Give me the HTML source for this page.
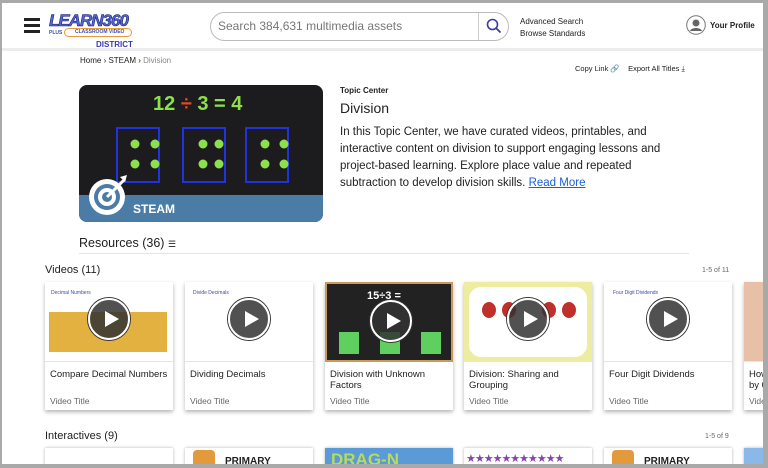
<!DOCTYPE html>
<html><head><meta charset="utf-8"><style>
*{margin:0;padding:0;box-sizing:border-box}
body{width:768px;height:468px;overflow:hidden;background:#fff;font-family:"Liberation Sans",Arial,sans-serif;color:#222;position:relative}
.frame{position:absolute;inset:0;border-top:3px solid #a9a9a9;border-left:2px solid #a9a9a9;border-right:5px solid #a9a9a9;border-bottom:4px solid #a9a9a9;pointer-events:none;z-index:10}
.hdr{position:absolute;left:0;top:0;width:768px;height:51px;border-bottom:3px solid #ececec}
.abs{position:absolute}
.card{position:absolute;top:282px;width:128px;height:128px;background:#fff;box-shadow:0 2px 4px rgba(0,0,0,.3)}
.thumb{height:80px;position:relative;overflow:hidden;border-bottom:1px solid #e5e5e5}
.play{position:absolute;left:43px;top:16px;width:42px;height:42px;border-radius:50%;background:rgba(50,50,50,.85);border:2px solid #fff;box-shadow:0 0 0 1px #333}
.play:after{content:"";position:absolute;left:15px;top:11px;border-left:14px solid #fff;border-top:8px solid transparent;border-bottom:8px solid transparent}
.ct{position:absolute;left:5px;top:87px;font-size:9.5px;line-height:11px;color:#222;white-space:nowrap}
.cs{position:absolute;left:5px;top:114px;font-size:8.5px;color:#666}
.ic{position:absolute;top:448px;width:128px;height:20px;background:#fff;box-shadow:0 0 3px rgba(0,0,0,.3);overflow:hidden}
</style></head><body>
<div class="frame"></div>
<div class="hdr">
 <div class="abs" style="left:24px;top:18px;width:16px;height:3px;background:#222;box-shadow:0 6px 0 #222,0 12px 0 #222"></div>
 <div class="abs" style="left:49px;top:11px;font:italic bold 17px 'Liberation Sans';color:#5566cc;letter-spacing:-1px;-webkit-text-stroke:0.6px #1a237e">LEARN360</div>
 <div class="abs" style="left:49px;top:30px;font-size:5px;color:#3b4fb8;font-weight:bold">PLUS</div>
 <div class="abs" style="left:64px;top:28px;width:68px;height:9px;border:1px solid #e89a3a;border-radius:5px;font-size:5px;color:#3b4fb8;font-weight:bold;padding-left:10px;line-height:7px">CLASSROOM VIDEO</div>
 <div class="abs" style="left:96px;top:40px;font-size:8px;font-weight:bold;color:#3b3bb0">DISTRICT</div>
 <div class="abs" style="left:210px;top:12px;width:299px;height:29px;border:1px solid #bbb;border-radius:15px"></div>
 <div class="abs" style="left:218px;top:19px;font-size:12px;color:#777">Search 384,631 multimedia assets</div>
 <div class="abs" style="left:478px;top:13px;width:1px;height:27px;background:#ccc"></div>
 <svg class="abs" style="left:486px;top:18px" width="16" height="16" viewBox="0 0 16 16"><circle cx="6.5" cy="6.5" r="5" fill="none" stroke="#3b3b9a" stroke-width="1.6"/><path d="M10 10l4.5 4.5" stroke="#3b3b9a" stroke-width="1.8"/></svg>
 <div class="abs" style="left:520px;top:16px;font-size:8px;line-height:12px;color:#222">Advanced Search<br>Browse Standards</div>
 <svg class="abs" style="left:686px;top:15px" width="20" height="20" viewBox="0 0 20 20"><circle cx="10" cy="10" r="9.3" fill="#fff" stroke="#777" stroke-width="1"/><circle cx="10" cy="8" r="3.5" fill="#666"/><path d="M4 16c1-4 11-4 12 0" fill="#666"/></svg>
 <div class="abs" style="left:710px;top:21px;font-size:8px;font-weight:bold;color:#222">Your Profile</div>
</div>
<div class="abs" style="left:80px;top:56px;font-size:8px;color:#222">Home › STEAM › <span style="color:#888">Division</span></div>
<div class="abs" style="left:575px;top:64px;font-size:7.5px;color:#222">Copy Link 🔗&nbsp;&nbsp;&nbsp;&nbsp;Export All Titles ⤓</div>
<div class="abs" style="left:79px;top:85px;width:244px;height:137px;border-radius:8px;overflow:hidden;background:#1c1c1e">
 <div class="abs" style="left:74px;top:8px;font-size:20px;font-weight:bold;color:#8de04c">12 <span style="color:#d94b2b">÷</span> 3 = 4</div>
 <div class="abs" style="left:37px;top:42px;width:44px;height:56px;border:2px solid #2233dd"></div>
 <div class="abs" style="left:103px;top:42px;width:44px;height:56px;border:2px solid #2233dd"></div>
 <div class="abs" style="left:166px;top:42px;width:44px;height:56px;border:2px solid #2233dd"></div>
 <svg class="abs" style="left:0;top:0" width="244" height="137"><g fill="#8de04c"><circle cx="56" cy="59" r="4.5"/><circle cx="76" cy="59" r="4.5"/><circle cx="56" cy="79" r="4.5"/><circle cx="76" cy="79" r="4.5"/><circle cx="124" cy="59" r="4.5"/><circle cx="140" cy="59" r="4.5"/><circle cx="124" cy="79" r="4.5"/><circle cx="140" cy="79" r="4.5"/><circle cx="186" cy="59" r="4.5"/><circle cx="205" cy="59" r="4.5"/><circle cx="186" cy="79" r="4.5"/><circle cx="205" cy="79" r="4.5"/></g></svg>
 <div class="abs" style="left:0;top:110px;width:244px;height:27px;background:#4a7ca6"></div>
 <div class="abs" style="left:54px;top:117px;font-size:12px;font-weight:bold;color:#fff">STEAM</div>
 <svg class="abs" style="left:8px;top:88px" width="44" height="44" viewBox="0 0 44 44"><circle cx="20" cy="24" r="18" fill="#fff"/><circle cx="20" cy="24" r="13" fill="#4a7ca6"/><circle cx="20" cy="24" r="9" fill="#fff"/><circle cx="20" cy="24" r="5" fill="#4a7ca6"/><path d="M20 24L38 6" stroke="#fff" stroke-width="3"/><path d="M33 4l7-2-2 7z" fill="#fff"/></svg>
</div>
<div class="abs" style="left:340px;top:86px;font-size:8px;font-weight:bold">Topic Center</div>
<div class="abs" style="left:340px;top:100px;font-size:14px">Division</div>
<div class="abs" style="left:340px;top:124px;width:340px;font-size:11.5px;line-height:17px;color:#222">In this Topic Center, we have curated videos, printables, and interactive content on division to support engaging lessons and project-based learning. Explore place value and repeated subtraction to develop division skills. <span style="color:#1a5fd6;text-decoration:underline">Read More</span></div>
<div class="abs" style="left:79px;top:236px;font-size:12.5px">Resources (36) <span style="font-size:9px">☰</span></div>
<div class="abs" style="left:79px;top:253px;width:610px;height:1px;background:#e5e5e5"></div>
<div class="abs" style="left:45px;top:264px;font-size:11px">Videos (11)</div>
<div class="abs" style="left:702px;top:267px;font-size:7px;color:#666">1-5 of 11</div>
<div class="card" style="left:45px"><div class="thumb" style="background:#fff"><div class="abs" style="left:4px;top:30px;width:118px;height:40px;background:#e3b13f"></div><div class="abs" style="left:6px;top:8px;font-size:5px;color:#3a4fa0">Decimal Numbers</div><div class="play"></div></div><div class="ct">Compare Decimal Numbers</div><div class="cs">Video Title</div></div>
<div class="card" style="left:185px"><div class="thumb"><div class="abs" style="left:8px;top:8px;font-size:5px;color:#3a4fa0">Divide Decimals</div><div class="play"></div></div><div class="ct">Dividing Decimals</div><div class="cs">Video Title</div></div>
<div class="card" style="left:325px"><div class="thumb" style="background:#222;border:2px solid #c89b5a"><div class="abs" style="left:40px;top:6px;font-size:11px;font-weight:bold;color:#fff">15÷3 =</div><div class="abs" style="left:12px;top:48px;width:20px;height:22px;background:#5fcf5f"></div><div class="abs" style="left:53px;top:48px;width:20px;height:22px;background:#5fcf5f"></div><div class="abs" style="left:94px;top:48px;width:20px;height:22px;background:#5fcf5f"></div><div class="play"></div></div><div class="ct">Division with Unknown<br>Factors</div><div class="cs">Video Title</div></div>
<div class="card" style="left:464px"><div class="thumb" style="background:#eeeca0"><div class="abs" style="left:5px;top:5px;width:118px;height:70px;background:#fff;border-radius:12px"></div><div class="abs" style="left:18px;top:20px;width:14px;height:16px;background:#c0302a;border-radius:50%;box-shadow:20px 0 0 #c0302a,60px 0 0 #c0302a,80px 0 0 #c0302a"></div><div class="play"></div></div><div class="ct">Division: Sharing and<br>Grouping</div><div class="cs">Video Title</div></div>
<div class="card" style="left:604px"><div class="thumb"><div class="abs" style="left:9px;top:8px;font-size:5px;color:#3a4fa0">Four Digit Dividends</div><div class="play"></div></div><div class="ct">Four Digit Dividends</div><div class="cs">Video Title</div></div>
<div class="card" style="left:744px"><div class="thumb" style="background:#e8c0a8"></div><div class="ct">How<br>by 0</div><div class="cs">Vide</div></div>
<div class="abs" style="left:45px;top:430px;font-size:11px">Interactives (9)</div>
<div class="abs" style="left:705px;top:433px;font-size:7px;color:#666">1-5 of 9</div>
<div class="ic" style="left:45px"></div>
<div class="ic" style="left:185px"><div class="abs" style="left:8px;top:2px;width:22px;height:20px;background:#e39a3d;border-radius:4px"></div><div class="abs" style="left:40px;top:8px;font-size:10px;font-weight:bold">PRIMARY</div></div>
<div class="ic" style="left:325px;background:#5a9ad6"><div class="abs" style="left:6px;top:2px;font-size:17px;font-weight:bold;color:#b7dc5c">DRAG-N</div></div>
<div class="ic" style="left:464px"><div class="abs" style="left:2px;top:4px;font-size:11px;color:#8844aa;letter-spacing:-1px">★★★★★★★★★★★</div></div>
<div class="ic" style="left:604px"><div class="abs" style="left:8px;top:2px;width:22px;height:20px;background:#e39a3d;border-radius:4px"></div><div class="abs" style="left:40px;top:8px;font-size:10px;font-weight:bold">PRIMARY</div></div>
<div class="ic" style="left:744px;background:#8ab8e8"></div>
</body></html>
